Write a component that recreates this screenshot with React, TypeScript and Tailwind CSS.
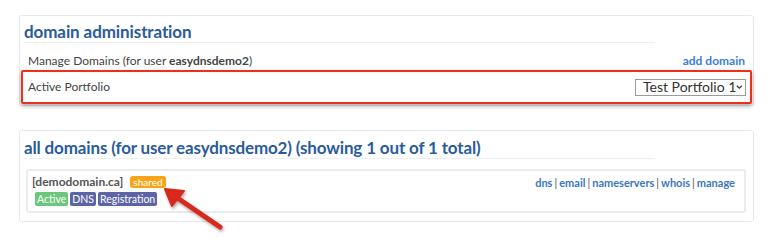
import { FC } from "react";

const Badge: FC<{ text: string; className: string }> = ({ text, className }) => (
  <span
    className={`inline-flex items-center rounded-[2px] leading-none whitespace-nowrap text-white ${className}`}
  >
    {text}
  </span>
);

const Arrow: FC = () => (
  <svg
    className="pointer-events-none absolute top-[182px] left-[158px]"
    width="72"
    height="56"
    viewBox="0 0 72 56"
  >
    <defs>
      <filter id="sh" x="-20%" y="-20%" width="140%" height="140%">
        <feDropShadow dx="1" dy="2" stdDeviation="1.5" floodColor="#000" floodOpacity="0.35" />
      </filter>
    </defs>
    <g filter="url(#sh)">
      <line x1="62" y1="45" x2="18" y2="15" stroke="#d8291c" strokeWidth="5" strokeLinecap="round" />
      <polygon points="7,7 26,9 14,24" fill="#d8291c" stroke="#d8291c" strokeWidth="2" strokeLinejoin="round" />
    </g>
  </svg>
);

export default function App() {
  const links = ["dns", "email", "nameservers", "whois", "manage"];
  return (
    <div
      className="relative h-[245px] w-[768px] overflow-hidden bg-white text-[#444]"
      style={{ fontFamily: "Lato, 'Open Sans', sans-serif" }}
    >
      <div className="flex flex-col gap-[24px] px-[19px] pt-[15px]">
        {/* domain administration */}
        <div className="h-[91px] w-[735px] rounded-[3px] border border-[#e4e9f1] px-[4px] pt-[6px]">
          <h2 className="text-[17px] leading-[20px] font-bold tracking-[-0.1px] text-[#2a5c9c]">
            domain administration
          </h2>
          <div className="h-px w-[631px] bg-[#eef0f4]" />
          <div className="mt-[10px] flex h-[16px] items-center justify-between pr-[4px] pl-[4px] text-[12px]">
            <span>
              Manage Domains (for user <b className="font-bold">easydnsdemo2</b>)
            </span>
            <a className="font-bold text-[#3b7de0]">add domain</a>
          </div>
          <div className="mt-[1px] -ml-[3px] flex h-[34px] w-[731px] items-center justify-between rounded-[2px] border-2 border-[#ee2f1c] pr-[4px] pl-[5px] text-[12px] shadow-[0_2px_4px_rgba(0,0,0,0.35)]">
            <span>Active Portfolio</span>
            <div className="flex h-[17px] w-[111px] items-center justify-between border border-[#9a9a9a] bg-white pr-[2px] pl-[7px] text-[14px] leading-none whitespace-nowrap text-[#333]">
              <span>Test Portfolio 1</span>
              <svg width="8" height="6" viewBox="0 0 8 6">
                <path d="M1 1.5 L4 4.5 L7 1.5" fill="none" stroke="#333" strokeWidth="1.4" />
              </svg>
            </div>
          </div>
        </div>

        {/* all domains */}
        <div className="h-[92px] w-[735px] rounded-[3px] border border-[#e4e9f1] px-[4px] pt-[7px]">
          <h2 className="text-[17px] leading-[20px] font-bold tracking-[-0.15px] text-[#2a5c9c]">
            all domains (for user easydnsdemo2) (showing 1 out of 1 total)
          </h2>
          <div className="h-px w-[631px] bg-[#eef0f4]" />
          <div className="mt-[10px] ml-[2px] flex h-[44px] w-[720px] justify-between rounded-[3px] border-2 border-[#e8ebf2] pt-[4px] pr-[9px] pl-[4px]">
            <div className="flex flex-col gap-[3px]">
              <div className="flex h-[14px] items-center gap-[7px]">
                <span className="text-[12px] font-bold text-[#555]">[demodomain.ca]</span>
                <Badge text="shared" className="h-[12px] rounded-[3px] bg-[#f7a416] px-[3px] text-[10px]" />
              </div>
              <div className="flex gap-[2px] pl-[3px]">
                <Badge text="Active" className="h-[14px] bg-[#6bc77c] px-[2px] text-[10.5px]" />
                <Badge text="DNS" className="h-[14px] bg-[#5c64a6] px-[2px] text-[10.5px]" />
                <Badge text="Registration" className="h-[14px] bg-[#5c64a6] px-[2px] text-[10.5px]" />
              </div>
            </div>
            <div className="flex h-[16px] items-center text-[11px] font-bold text-[#3a78c0]">
              {links.map((l, i) => (
                <span key={l} className="flex items-center">
                  {i > 0 && <span className="px-[2px] font-normal text-[#555]">|</span>}
                  <a>{l}</a>
                </span>
              ))}
            </div>
          </div>
        </div>
      </div>
      <Arrow />
    </div>
  );
}
